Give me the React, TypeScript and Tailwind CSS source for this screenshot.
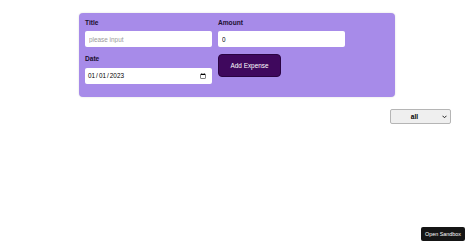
import React from "react";

export default function App() {
  const font = { fontFamily: '"Liberation Sans", Arial, sans-serif' };
  return (
    <div className="relative w-[474px] h-[248px] bg-white overflow-hidden" style={font}>
      <div className="pt-[13px] flex flex-col items-center">
        <div className="w-[316px] rounded-[4px] bg-[#a78be9] pt-[6px] px-[6px] pb-[13px] shadow-[0_0_2px_rgba(0,0,0,0.15)]">
          <div className="flex flex-wrap gap-x-[6px] gap-y-[7px]">
            <div className="w-[127px] flex flex-col">
              <label className="text-[6.6px] leading-[8px] font-bold text-[#1b1030] mb-[4px]">Title</label>
              <input
                placeholder="please input"
                className="h-[16px] w-full rounded-[2px] bg-white px-[4px] text-[6.4px] text-black placeholder:text-[#9a9a9a] outline-none"
              />
            </div>
            <div className="w-[127px] flex flex-col">
              <label className="text-[6.6px] leading-[8px] font-bold text-[#1b1030] mb-[4px]">Amount</label>
              <input
                defaultValue="0"
                className="h-[16px] w-full rounded-[2px] bg-white px-[4px] text-[6.4px] text-black outline-none"
              />
            </div>
            <div className="w-[127px] flex flex-col">
              <label className="text-[6.6px] leading-[8px] font-bold text-[#1b1030] mb-[5px] mt-[1px]">Date</label>
              <input
                type="date"
                defaultValue="2023-01-01"
                className="h-[16px] w-full rounded-[2px] bg-white pl-[2px] pr-[4px] text-[6.4px] text-black outline-none"
              />
            </div>
            <div className="w-[127px] flex items-start">
              <button className="w-[63px] h-[23px] rounded-[4px] bg-[#3f085d] border border-[#2a0342] text-white text-[6.4px]">
                Add Expense
              </button>
            </div>
          </div>
        </div>
        <div className="w-[428px] flex justify-end mt-[12px]">
          <div className="relative w-[61px] h-[15px]">
            <select className="block appearance-none w-full h-full rounded-[2px] border border-[#b5b5b5] bg-[#efefef] pl-0 pr-[12px] py-0 text-[6.6px] leading-[13px] font-bold text-black [text-align-last:center] outline-none">
              <option>all</option>
            </select>
            <svg
              className="pointer-events-none absolute right-[4px] top-[5.5px]"
              width="5"
              height="4"
              viewBox="0 0 10 8"
            >
              <path d="M1 1.5 L5 5.5 L9 1.5" stroke="#222" strokeWidth="2" fill="none" />
            </svg>
          </div>
        </div>
      </div>
      <div className="absolute right-[9px] bottom-[7px] w-[44px] h-[14px] rounded-[2px] bg-[#151515] text-white text-[5.4px] flex items-center justify-center">
        Open Sandbox
      </div>
    </div>
  );
}
